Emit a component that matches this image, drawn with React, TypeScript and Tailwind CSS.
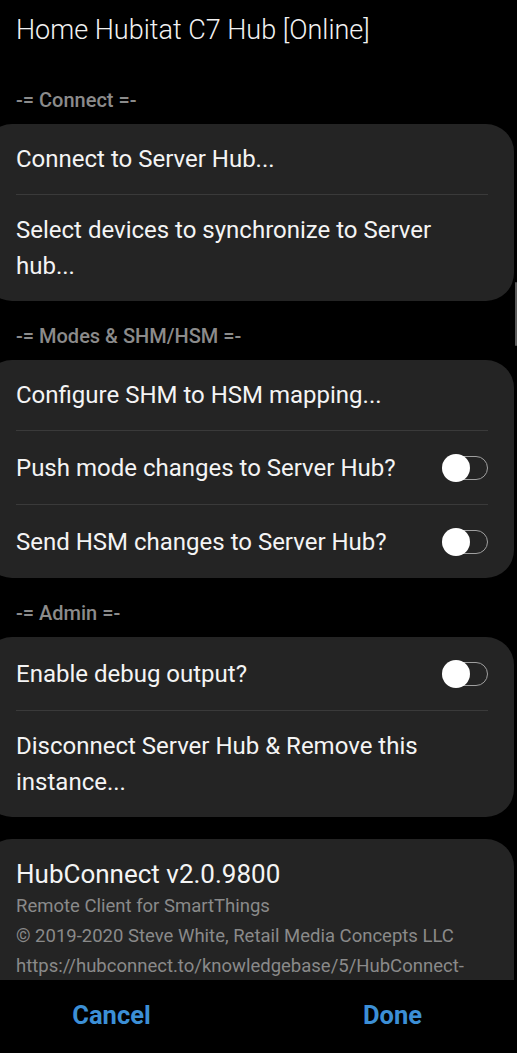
import React from "react";

type Row = { label: string; toggle?: boolean };

const sections: { title: string; rows: Row[] }[] = [
  {
    title: "-= Connect =-",
    rows: [
      { label: "Connect to Server Hub..." },
      { label: "Select devices to synchronize to Server hub..." },
    ],
  },
  {
    title: "-= Modes & SHM/HSM =-",
    rows: [
      { label: "Configure SHM to HSM mapping..." },
      { label: "Push mode changes to Server Hub?", toggle: true },
      { label: "Send HSM changes to Server Hub?", toggle: true },
    ],
  },
  {
    title: "-= Admin =-",
    rows: [
      { label: "Enable debug output?", toggle: true },
      { label: "Disconnect Server Hub & Remove this instance..." },
    ],
  },
];

function Toggle() {
  return (
    <div className="relative h-[24px] w-[45px] shrink-0">
      <div className="absolute inset-0 rounded-full border-[1.5px] border-[#a0a0a0]" />
      <div className="absolute left-[-1px] top-[-2px] h-[28px] w-[28px] rounded-full bg-white" />
    </div>
  );
}

export default function App() {
  return (
    <div
      className="relative flex h-[1053px] w-[517px] flex-col overflow-hidden bg-black text-[#f4f4f4]"
      style={{ fontFamily: "Roboto, 'Noto Sans', sans-serif" }}
    >
      <div className="flex-1 overflow-hidden">
        <h1 className="px-4 pt-[12px] text-[27px] font-light leading-[36px] text-[#f2f2f2]">
          Home Hubitat C7 Hub [Online]
        </h1>

        {sections.map((s, si) => (
          <div key={s.title}>
            <div
              className={`px-4 pb-[12px] text-[20px] font-medium leading-[24px] text-[#8b8b8b] ${
                si === 0 ? "pt-[40px]" : "pt-[23px]"
              }`}
            >
              {s.title}
            </div>
            <div className="ml-[-16px] mr-[3px] rounded-[28px] bg-[#242424] pl-[32px] pr-[26px]">
              {s.rows.map((r, i) => (
                <div
                  key={r.label}
                  className={`flex items-center gap-3 ${r.toggle ? "pt-[19px] pb-[18px]" : "py-[17px]"} ${
                    i > 0 ? "border-t border-[#3a3a3a]" : ""
                  }`}
                >
                  <div className="flex-1 pr-[8px] text-[24px] leading-[36px]">{r.label}</div>
                  {r.toggle && <Toggle />}
                </div>
              ))}
            </div>
          </div>
        ))}

        <div className="ml-[-16px] mr-[3px] mt-[22px] rounded-t-[28px] bg-[#242424] pl-[32px] pr-[20px] pt-[18px] pb-[40px]">
          <div className="text-[26px] leading-[34px] text-[#f4f4f4]">HubConnect v2.0.9800</div>
          <div className="text-[18.5px] leading-[30px] text-[#8a8a8a]">
            <div>Remote Client for SmartThings</div>
            <div>© 2019-2020 Steve White, Retail Media Concepts LLC</div>
            <div className="whitespace-nowrap">https://hubconnect.to/knowledgebase/5/HubConnect-</div>
          </div>
        </div>
      </div>

      <div className="h-[73px] shrink-0 overflow-hidden bg-black">
        <div className="ml-[-29px] flex h-full w-[562px] items-center pb-[2px] text-[25.5px] font-bold text-[#3c8fd6]">
          <div className="flex-1 text-center">Cancel</div>
          <div className="flex-1 text-center">Done</div>
        </div>
      </div>

      <div className="absolute right-0 top-[282px] h-[64px] w-[2px] rounded-full bg-[#5a5a5a]" />
    </div>
  );
}
